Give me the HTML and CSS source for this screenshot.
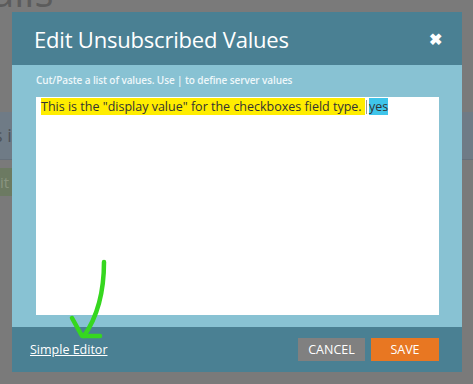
FILE: index.html
```html
<!DOCTYPE html>
<html lang="en">
<head>
    <meta charset="UTF-8">
    <title>Edit Unsubscribed Values</title>
    <link rel="stylesheet" href="styles.css">
</head>
<body>
    <div class="page">
        <div class="page-title">ails</div>
        <div class="page-row"><span>s is</span></div>
        <div class="page-btn">it</div>
    </div>

    <div class="modal">
        <div class="modal-head">
            <h1>Edit Unsubscribed Values</h1>
            <span class="close">&#x2716;</span>
        </div>
        <div class="modal-body">
            <p class="hint">Cut/Paste a list of values. Use | to define server values</p>
            <div class="editor">
                <span class="mark">This is the "display value" for the checkboxes field type. </span><span class="caret"></span><span class="mark-blue">yes</span>
            </div>
        </div>
        <div class="modal-foot">
            <a href="#" class="simple">Simple Editor</a>
            <div class="buttons">
                <button type="button" class="btn cancel">CANCEL</button>
                <button type="button" class="btn save">SAVE</button>
            </div>
        </div>
        <svg class="arrow" width="60" height="90" viewBox="0 0 60 90">
            <path d="M44 4 C44 30 40 55 24 78" fill="none" stroke="#36d71f" stroke-width="4.5" stroke-linecap="round"/>
            <path d="M12 60 L22 78 L40 78" fill="none" stroke="#36d71f" stroke-width="4.5" stroke-linecap="round" stroke-linejoin="round"/>
        </svg>
    </div>
</body>
</html>
```

FILE: styles.css
```css
body {
    margin: 0;
    background-color: #7a7a7a;
    font-family: "Open Sans", "Liberation Sans", sans-serif;
    overflow: hidden;
}

.page {
    height: 384px;
}
.page-title {
    font-size: 40px;
    color: #5c5c5c;
    line-height: 40px;
    margin-top: -28px;
    margin-left: -8px;
    height: 45px;
}
.page-row {
    margin-top: 95px;
    height: 47px;
    background-color: #6f7b86;
    border-bottom: 1px solid #66707a;
    font-size: 18px;
    color: #4d5359;
    line-height: 47px;
    margin-left: -6px;
}
.page-btn {
    margin-top: 8px;
    width: 40px;
    height: 28px;
    background-color: #6c7a62;
    color: #8a9580;
    font-size: 15px;
    line-height: 28px;
}

.modal {
    position: absolute;
    left: 12px;
    top: 12px;
    width: 450px;
}
.modal-head {
    height: 53px;
    background-color: #4a8093;
    display: flex;
    align-items: center;
    justify-content: space-between;
    padding: 0 20px 0 22px;
}
.modal-head h1 {
    margin: 0;
    font-size: 22px;
    font-weight: normal;
    color: #ffffff;
    letter-spacing: -0.2px;
}
.close {
    color: #ffffff;
    font-size: 16px;
    font-weight: bold;
}
.modal-body {
    background-color: #88c2d3;
    padding: 8px 23px 12px 24px;
}
.hint {
    margin: 0 0 10px 0;
    font-size: 10px;
    font-weight: 600;
    color: #eef7fa;
    line-height: 14px;
    letter-spacing: -0.1px;
}
.editor {
    background-color: #ffffff;
    height: 214px;
    padding: 2px 5px;
    font-size: 12.5px;
    line-height: 15px;
    color: #333333;
}
.mark {
    background-color: #ffed00;
}
.mark-blue {
    background-color: #3fc5ea;
}
.caret {
    display: inline-block;
    width: 1px;
    height: 14px;
    background-color: #999999;
    vertical-align: -3px;
    margin: 0 2px 0 1px;
}
.modal-foot {
    height: 45px;
    background-color: #4a8093;
    display: flex;
    align-items: center;
    justify-content: space-between;
    padding: 0 23px 0 18px;
}
.simple {
    color: #ffffff;
    font-size: 12.5px;
    text-decoration: underline;
}
.buttons {
    display: flex;
    gap: 6px;
}
.btn {
    border: none;
    height: 23px;
    padding: 0;
    color: #ffffff;
    font-family: "Open Sans", "Liberation Sans", sans-serif;
    font-size: 12.5px;
}
.cancel {
    width: 67px;
    background-color: #808080;
}
.save {
    width: 68px;
    background-color: #e87722;
}
.arrow {
    position: absolute;
    left: 48px;
    top: 246px;
}
```
